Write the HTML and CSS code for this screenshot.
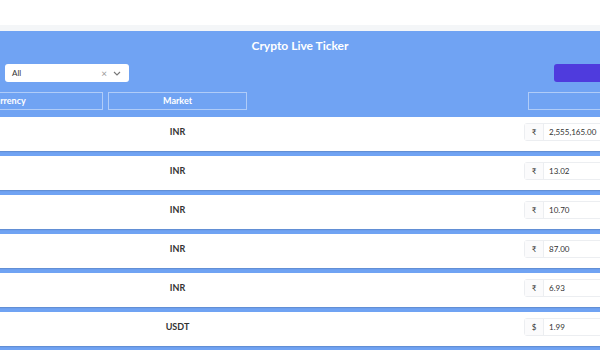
FILE: index.html
```html
<!DOCTYPE html>
<html lang="en">
<head>
    <meta charset="UTF-8">
    <title>Crypto Live Ticker</title>
    <link rel="stylesheet" href="styles.css">
</head>
<body>
    <div class="topbar"></div>

    <div class="ticker">
        <h1 class="title">Crypto Live Ticker</h1>

        <div class="filters">
            <div class="select">
                <span class="select-value">All</span>
                <span class="select-clear">&times;</span>
                <svg class="select-arrow" width="8" height="5" viewBox="0 0 8 5"><path d="M1 1l3 3 3-3" fill="none" stroke="#777" stroke-width="1.1"/></svg>
            </div>
            <button class="refresh"></button>
        </div>

        <div class="grid head">
            <div class="cell">Currency</div>
            <div class="cell">Market</div>
            <div class="spacer"></div>
            <div class="cell"></div>
        </div>

        <div class="rows">
            <div class="grid row">
                <div></div><div class="market">INR</div><div></div>
                <div class="price"><span class="unit">₹</span><span class="amount">2,555,165.00</span></div>
            </div>
            <div class="grid row">
                <div></div><div class="market">INR</div><div></div>
                <div class="price"><span class="unit">₹</span><span class="amount">13.02</span></div>
            </div>
            <div class="grid row">
                <div></div><div class="market">INR</div><div></div>
                <div class="price"><span class="unit">₹</span><span class="amount">10.70</span></div>
            </div>
            <div class="grid row">
                <div></div><div class="market">INR</div><div></div>
                <div class="price"><span class="unit">₹</span><span class="amount">87.00</span></div>
            </div>
            <div class="grid row">
                <div></div><div class="market">INR</div><div></div>
                <div class="price"><span class="unit">₹</span><span class="amount">6.93</span></div>
            </div>
            <div class="grid row">
                <div></div><div class="market">USDT</div><div></div>
                <div class="price"><span class="unit">$</span><span class="amount">1.99</span></div>
            </div>
        </div>
    </div>
</body>
</html>
```

FILE: styles.css
```css
/* global */
html, body {
    margin: 0;
    overflow: hidden;
}
body {
    font-family: Lato, "Open Sans", sans-serif;
    background: #fff;
    width: 600px;
    height: 350px;
}

/* top strip */
.topbar {
    height: 25px;
    background: #fff;
    border-bottom: 6px solid #f4f6f8;
}

/* blue panel */
.ticker {
    background: #70a3f3;
    padding-bottom: 20px;
}
.title {
    margin: 0;
    padding: 8px 0 0;
    height: 25px;
    text-align: center;
    color: #fff;
    font-size: 12px;
    font-weight: 700;
    line-height: 14px;
}

/* filter row */
.filters {
    display: flex;
    justify-content: space-between;
    padding: 0 0 0 5px;
    height: 28px;
}
.select {
    width: 124px;
    height: 18px;
    background: #fff;
    border-radius: 3px;
    display: flex;
    align-items: center;
    box-sizing: border-box;
    padding: 0 8px 0 7px;
    font-size: 8px;
    color: #333;
}
.select-value { flex: 1; }
.select-clear {
    color: #999;
    font-size: 10px;
    margin-right: 6px;
}
.refresh {
    width: 60px;
    height: 18px;
    margin-right: -14px;
    border: none;
    border-radius: 3px;
    background: #4f3bdd;
}

/* columns */
.grid {
    display: grid;
    grid-template-columns: 191px 139px 271px 140px;
    gap: 5px;
    margin-left: -88px;
}
.head {
    height: 25px;
}
.head .cell {
    height: 18px;
    border: 1px solid rgba(255,255,255,0.45);
    box-sizing: border-box;
    color: #fff;
    font-size: 9px;
    font-weight: 700;
    text-align: center;
    line-height: 16px;
}

/* table rows */
.rows {
    display: flex;
    flex-direction: column;
    gap: 5px;
}
.row {
    background: #fff;
    height: 34px;
    box-sizing: border-box;
    padding: 6px 200px 0 0;
    margin-right: -200px;
    align-items: start;
    box-shadow: 0 1px 1px rgba(0,0,0,0.12);
}
.market {
    text-align: center;
    font-size: 9px;
    font-weight: 700;
    color: #333;
    line-height: 17px;
}
.price {
    display: flex;
    height: 18px;
    margin-left: -4px;
    border: 1px solid #eceef1;
    border-radius: 3px;
    box-sizing: border-box;
    font-size: 8px;
    color: #333;
}
.unit {
    width: 18px;
    border-right: 1px solid #eceef1;
    text-align: center;
    line-height: 16px;
    background: #fbfbfc;
}
.amount {
    padding-left: 5px;
    line-height: 16px;
    flex: 1;
}
```
